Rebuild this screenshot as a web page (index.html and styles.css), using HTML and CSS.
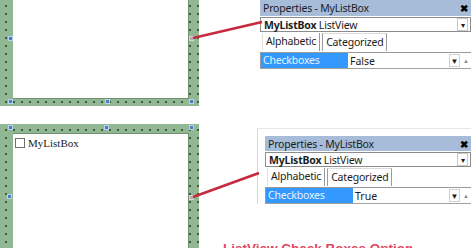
FILE: index.html
```html
<!DOCTYPE html>
<html>
<head>
  <meta charset="utf-8">
  <meta name="viewport" content="width=device-width">
  <title>ListView Checkboxes</title>
  <link rel="stylesheet" href="styles.css">
</head>
<body>
  <div class="page">
    <section class="shot shotTop">
      <div class="designer">
        <div class="canvas"></div>
        <span class="handle" style="left:8px;top:36px"></span>
        <span class="handle" style="left:8px;top:99px"></span>
        <span class="handle" style="left:105px;top:99px"></span>
        <span class="handle" style="left:189px;top:99px"></span>
        <span class="handle handleLink" style="left:189px;top:36px"></span>
      </div>
      <div class="side">
        <div class="props">
          <div class="title">Properties - MyListBox <span class="close">&#x2716;</span></div>
          <div class="combo"><b>MyListBox</b>&nbsp;ListView <span class="drop">&#9662;</span></div>
          <div class="tabs">
            <span class="tab tabOn">Alphabetic</span>
            <span class="tab">Categorized</span>
          </div>
          <div class="row">
            <span class="name">Checkboxes</span>
            <span class="value">False <span class="pick">&#9660;</span></span>
            <span class="scroll">&#9650;</span>
          </div>
        </div>
      </div>
    </section>

    <section class="shot shotBottom">
      <div class="designer">
        <div class="canvas">
          <label class="item"><span class="check"></span>MyListBox</label>
        </div>
        <span class="handle" style="left:8px;top:1px"></span>
        <span class="handle" style="left:104px;top:1px"></span>
        <span class="handle" style="left:189px;top:1px"></span>
        <span class="handle" style="left:7px;top:70px"></span>
        <span class="handle handleLink" style="left:189px;top:71px"></span>
      </div>
      <div class="side">
        <div class="props framed">
          <div class="title">Properties - MyListBox <span class="close">&#x2716;</span></div>
          <div class="combo"><b>MyListBox</b>&nbsp;ListView <span class="drop">&#9662;</span></div>
          <div class="tabs">
            <span class="tab tabOn">Alphabetic</span>
            <span class="tab">Categorized</span>
          </div>
          <div class="row">
            <span class="name">Checkboxes</span>
            <span class="value">True <span class="pick">&#9660;</span></span>
            <span class="scroll">&#9650;</span>
          </div>
        </div>
        <p class="caption">ListView Check Boxes Option</p>
      </div>
    </section>

    <svg class="links" width="471" height="248" viewBox="0 0 471 248">
      <line x1="193" y1="38" x2="262" y2="22" stroke="#c62a3c" stroke-width="2.4" />
      <line x1="193" y1="197" x2="259" y2="173" stroke="#c62a3c" stroke-width="2.4" />
    </svg>
  </div>
</body>
</html>
```

FILE: styles.css
```css
body {
  margin: 0;
  background: #ffffff;
}

.page {
  position: relative;
  width: 471px;
  height: 248px;
  overflow: hidden;
  font-family: "Noto Sans", "Open Sans", sans-serif;
}

.shot {
  display: flex;
  flex-direction: row;
  height: 124px;
}

/* form designer with green dotted grid */
.designer {
  position: relative;
  box-sizing: border-box;
  width: 199px;
  background-color: #92b893;
  background-image: radial-gradient(circle, #3d5a3d 0.7px, transparent 1.1px);
  background-size: 8px 8px;
  background-position: 2px 2px;
}
.shotTop .designer {
  height: 106px;
  padding: 0 10px 7px 13px;
}
.shotBottom .designer {
  height: 124px;
  padding: 9px 10px 0 13px;
}

.canvas {
  box-sizing: border-box;
  height: 100%;
  background: #ffffff;
  border-right: 1px solid #6f8f6f;
  border-bottom: 1px solid #6f8f6f;
}
.shotBottom .canvas {
  border-top: 1px solid #6f8f6f;
  border-bottom: none;
}

.handle {
  position: absolute;
  box-sizing: border-box;
  width: 5px;
  height: 5px;
  background: #4a7fc6;
  border: 1px solid #b9d3ef;
}
.handleLink {
  background: #b7a9b2;
  border-color: #ddd4da;
}

.item {
  display: flex;
  align-items: center;
  padding: 3px 0 0 2px;
  font-family: "Liberation Serif", serif;
  font-size: 11px;
  color: #222222;
}
.check {
  width: 8px;
  height: 8px;
  border: 1px solid #707070;
  margin-right: 3px;
}

.side {
  display: flex;
  flex-direction: column;
  flex: 1;
}

/* properties window */
.props {
  display: flex;
  flex-direction: column;
  font-size: 10.5px;
  color: #1c1c1c;
}
.shotTop .props {
  margin-left: 61px;
}
.shotBottom .props {
  margin: 4px 0 0 58px;
  padding: 7px 0 0 7px;
  border-left: 1px solid #d9d9d9;
  border-top: 1px solid #e6e6e6;
}

.title {
  display: flex;
  align-items: center;
  height: 16px;
  padding-left: 3px;
  background: #a7bcd9;
  letter-spacing: -0.2px;
}
.shotBottom .title {
  height: 15px;
}
.close {
  margin-left: auto;
  margin-right: 3px;
  font-size: 10px;
  font-weight: bold;
  color: #000000;
}

.combo {
  display: flex;
  align-items: center;
  box-sizing: border-box;
  height: 15px;
  margin-top: 1px;
  padding-left: 3px;
  border: 1px solid #8c8c8c;
  background: #ffffff;
  letter-spacing: -0.2px;
}
.drop {
  margin-left: auto;
  width: 9px;
  height: 11px;
  margin-right: 2px;
  border: 1px solid #c8c8c8;
  font-size: 8px;
  line-height: 11px;
  text-align: center;
}

.tabs {
  display: flex;
  height: 19px;
  align-items: flex-end;
  padding-left: 2px;
}
.tab {
  padding: 0 3px;
  height: 17px;
  line-height: 16px;
  border-right: 1px solid #9a9a9a;
  letter-spacing: -0.2px;
}
.tabOn {
  border-left: 1px solid #e0e0e0;
  height: 18px;
  margin-right: 2px;
}
.tab + .tab {
  border-left: 1px solid #9a9a9a;
  border-top: 1px solid #dcdcdc;
}

.row {
  display: flex;
  align-items: center;
  height: 15px;
  margin-top: 1px;
  border-top: 1px solid #9a9a9a;
  border-bottom: 1px solid #a0a0a0;
  border-left: 1px solid #9a9a9a;
}
.name {
  width: 85px;
  height: 100%;
  padding-left: 2px;
  background: #3399ff;
  color: #e8f3ff;
  line-height: 15px;
  letter-spacing: -0.2px;
}
.value {
  display: flex;
  align-items: center;
  flex: 1;
  height: 100%;
  padding-left: 2px;
  background: #ffffff;
}
.pick {
  margin-left: auto;
  margin-right: 1px;
  width: 9px;
  font-size: 8px;
  text-align: center;
  border: 1px solid #d0d0d0;
  line-height: 11px;
}
.scroll {
  width: 10px;
  font-size: 6px;
  color: #8a8a8a;
  text-align: center;
}

.caption {
  margin: 37px 0 0 24px;
  font-family: "Liberation Sans", Arial, sans-serif;
  font-weight: bold;
  font-size: 13.5px;
  color: #df4660;
  white-space: nowrap;
}

.links {
  position: absolute;
  top: 0;
  left: 0;
}
```
